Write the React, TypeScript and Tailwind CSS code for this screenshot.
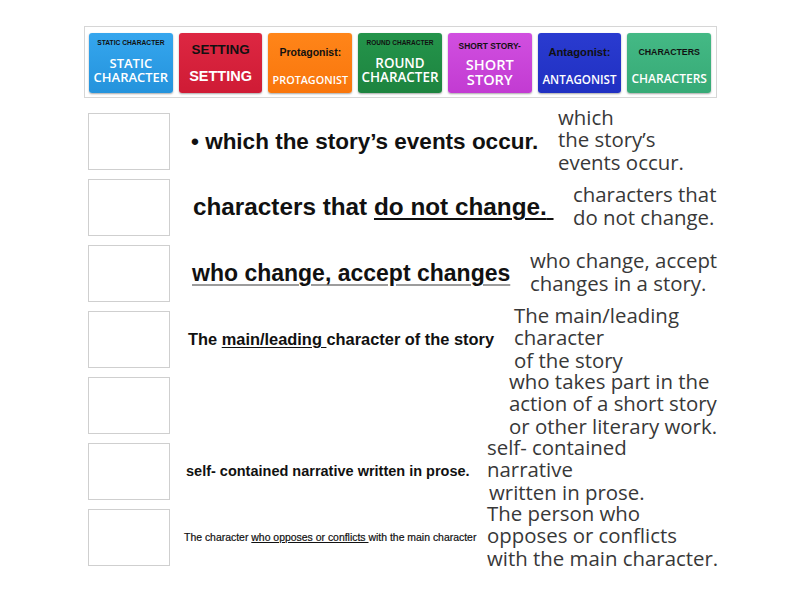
const tiles = [
  {
    bg: 'bg-gradient-to-b from-[#35a6ee] to-[#2493dc]',
    top: 'STATIC CHARACTER',
    topCls: "pt-[6px] text-[6.7px] leading-[8px] font-bold font-['Liberation_Sans',sans-serif]",
    bottom: ['STATIC', 'CHARACTER'],
    bottomCls: "mt-[9px] text-[13px] leading-[14px] font-semibold font-['Open_Sans',sans-serif]",
  },
  {
    bg: 'bg-gradient-to-b from-[#dd2742] to-[#cf1b35]',
    top: 'SETTING',
    topCls: "pt-[9px] text-[13.4px] leading-[16px] font-bold font-['Liberation_Sans',sans-serif]",
    bottom: ['SETTING'],
    bottomCls: "mt-[10px] text-[14.5px] leading-[17px] font-bold font-['Liberation_Sans',sans-serif]",
  },
  {
    bg: 'bg-gradient-to-b from-[#ff8519] to-[#f9760b]',
    top: 'Protagonist:',
    topCls: "pt-[13px] text-[10.5px] leading-[13px] font-bold font-['Liberation_Sans',sans-serif]",
    bottom: ['PROTAGONIST'],
    bottomCls: "mt-[14px] text-[10.8px] leading-[14px] font-semibold font-['Open_Sans',sans-serif]",
  },
  {
    bg: 'bg-gradient-to-b from-[#24944b] to-[#1d843f]',
    top: 'ROUND CHARACTER',
    topCls: "pt-[6px] text-[6.5px] leading-[8px] font-bold font-['Liberation_Sans',sans-serif]",
    bottom: ['ROUND', 'CHARACTER'],
    bottomCls: "mt-[9px] text-[13.4px] leading-[14px] font-semibold font-['Open_Sans',sans-serif]",
  },
  {
    bg: 'bg-gradient-to-b from-[#d14fe0] to-[#c23bd2]',
    top: 'SHORT STORY-',
    topCls: "pt-[8px] text-[8.4px] leading-[10px] font-bold font-['Liberation_Sans',sans-serif]",
    bottom: ['SHORT', 'STORY'],
    bottomCls: "mt-[6px] text-[14.6px] leading-[15px] font-semibold font-['Open_Sans',sans-serif]",
  },
  {
    bg: 'bg-gradient-to-b from-[#2a3bd0] to-[#2030c2]',
    top: 'Antagonist:',
    topCls: "pt-[13px] text-[11.2px] leading-[13px] font-bold font-['Liberation_Sans',sans-serif]",
    bottom: ['ANTAGONIST'],
    bottomCls: "mt-[14px] text-[11.6px] leading-[14px] font-semibold font-['Open_Sans',sans-serif]",
  },
  {
    bg: 'bg-gradient-to-b from-[#44b985] to-[#36aa76]',
    top: 'CHARACTERS',
    topCls: "pt-[14px] text-[8.8px] leading-[11px] font-bold font-['Liberation_Sans',sans-serif]",
    bottom: ['CHARACTERS'],
    bottomCls: "mt-[14px] text-[12px] leading-[14px] font-semibold font-['Open_Sans',sans-serif]",
  },
];

const mid = "font-['Liberation_Sans',Arial,sans-serif] text-[#111] whitespace-nowrap";

const rows = [
  {
    midCls: 'w-[388px] pl-[21px]',
    content: (
      <span className={`${mid} font-bold text-[22.5px]`}>
        • which the story’s events occur.
      </span>
    ),
    lines: ['which', 'the story’s', 'events occur.'],
  },
  {
    midCls: 'w-[403px] pl-[23px]',
    content: (
      <span className={`${mid} font-bold text-[24.3px]`}>
        characters that{' '}
        <span className="underline decoration-[1.5px] underline-offset-[3px]">do not change.{'\u00a0'}</span>
      </span>
    ),
    lines: ['characters that', 'do not change.'],
  },
  {
    midCls: 'w-[360px] pl-[22px]',
    content: (
      <span
        className={`${mid} font-bold text-[23px] underline decoration-[#9c9c9c] decoration-2 underline-offset-[3px]`}
      >
        who change, accept changes
      </span>
    ),
    lines: ['who change, accept', 'changes in a story.'],
  },
  {
    midCls: 'w-[344px] pl-[18px]',
    content: (
      <span className={`${mid} font-bold text-[16.4px]`}>
        The <span className="underline underline-offset-2">main/leading </span>character of the story
      </span>
    ),
    lines: ['The main/leading', 'character', 'of the story'],
  },
  {
    midCls: 'w-[339px]',
    content: null,
    lines: ['who takes part in the', 'action of a short story', 'or other literary work.'],
  },
  {
    midCls: 'w-[317px] pl-[16px]',
    content: (
      <span className={`${mid} font-bold text-[14.5px]`}>self- contained narrative written in prose.</span>
    ),
    lines: ['self- contained', 'narrative', 'written in prose.'],
  },
  {
    midCls: 'w-[317px] pl-[14px]',
    content: (
      <span className={`${mid} text-[10.45px] [-webkit-text-stroke:0.2px_#111]`}>
        The character <span className="underline">who opposes or conflicts </span>with the main character
      </span>
    ),
    lines: ['The person who', 'opposes or conflicts', 'with the main character.'],
  },
];

export default function App() {
  return (
    <div className="w-[800px] h-[600px] bg-white overflow-hidden">
      {/* answer tiles */}
      <div className="ml-[84px] mt-[26px] w-[633px] h-[72px] border border-[#d6d6d6] pl-[4px] pr-[5px] pt-[6px] flex gap-[6px]">
        {tiles.map((t, i) => (
          <div
            key={i}
            className={`${t.bg} flex-1 h-[60px] rounded-[3px] shadow-[0_1px_2px_rgba(0,0,0,0.35)] flex flex-col items-center text-center`}
          >
            <div className={`${t.topCls} text-[#111] whitespace-nowrap`}>{t.top}</div>
            <div className={`${t.bottomCls} text-white whitespace-nowrap`}>
              {t.bottom.map((b) => (
                <div key={b}>{b}</div>
              ))}
            </div>
          </div>
        ))}
      </div>

      {/* matching rows */}
      <div className="ml-[88px] mt-[15px] flex flex-col gap-[9px]">
        {rows.map((r, i) => (
          <div key={i} className="h-[57px] flex items-center">
            <div className="w-[82px] h-[57px] border border-[#cfcfcf] bg-white shrink-0" />
            <div className={`${r.midCls} shrink-0 flex items-center`}>{r.content}</div>
            <div className="mb-[4px] font-['Open_Sans',sans-serif] text-[20.4px] leading-[22.5px] text-[#383838] whitespace-nowrap">
              {r.lines.map((l, j) => (
                <div key={l} className={i === 5 && j === 2 ? 'pl-[2px]' : ''}>
                  {l}
                </div>
              ))}
            </div>
          </div>
        ))}
      </div>
    </div>
  );
}
